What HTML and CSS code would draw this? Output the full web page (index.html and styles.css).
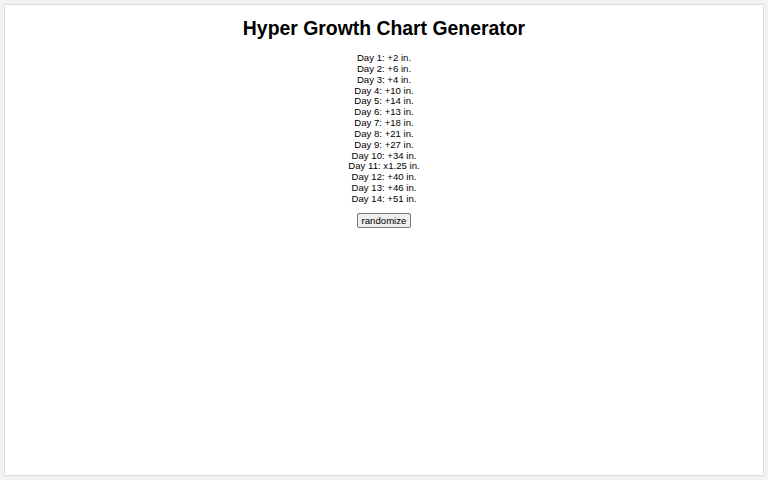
FILE: index.html
```html
<!DOCTYPE html>
<html>
<head>
<meta charset="utf-8">
<title>Hyper Growth Chart Generator</title>
<link rel="stylesheet" href="styles.css">
</head>
<body>
<main class="sheet">
  <h1 class="title">Hyper Growth Chart Generator</h1>
  <div class="days">
    <div>Day 1: +2 in.</div>
    <div>Day 2: +6 in.</div>
    <div>Day 3: +4 in.</div>
    <div>Day 4: +10 in.</div>
    <div>Day 5: +14 in.</div>
    <div>Day 6: +13 in.</div>
    <div>Day 7: +18 in.</div>
    <div>Day 8: +21 in.</div>
    <div>Day 9: +27 in.</div>
    <div>Day 10: +34 in.</div>
    <div>Day 11: x1.25 in.</div>
    <div>Day 12: +40 in.</div>
    <div>Day 13: +46 in.</div>
    <div>Day 14: +51 in.</div>
  </div>
  <button class="randomize" type="button">randomize</button>
</main>
</body>
</html>
```
FILE: styles.css
```css
html, body {
  margin: 0;
  height: 100%;
}
body {
  background: #f1f1f1;
  font-family: "Liberation Sans", Arial, sans-serif;
  color: #000;
  padding: 4px;
  box-sizing: border-box;
}
.sheet {
  height: 100%;
  box-sizing: border-box;
  background: #fff;
  border: 1px solid #dcdcdc;
  display: flex;
  flex-direction: column;
  align-items: center;
  text-align: center;
}
.title {
  font-size: 19.4px;
  font-weight: bold;
  margin: 12px 0 0;
  line-height: 23px;
}
.days {
  margin-top: 13px;
  font-size: 9.6px;
  line-height: 10.85px;
}
.randomize {
  margin-top: 8px;
  font-family: "Liberation Sans", Arial, sans-serif;
  font-size: 9.6px;
  padding: 1px 4px;
  background: #efefef;
  border: 1px solid #767676;
  border-radius: 2px;
  color: #000;
}
```
